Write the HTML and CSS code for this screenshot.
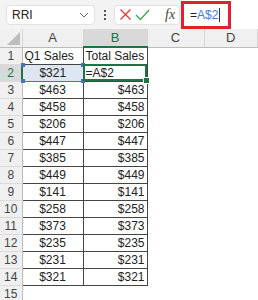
FILE: index.html
```html
<!DOCTYPE html>
<html lang="en">
<head>
    <meta charset="UTF-8">
    <title>Sheet</title>
    <link rel="stylesheet" href="styles.css">
</head>
<body>

<!-- Formula bar -->
<div class="toolbar">
    <div class="name-box">
        <span>RRI</span>
        <svg class="chevron" width="10" height="6" viewBox="0 0 10 6"><path d="M1 1 L5 5 L9 1" fill="none" stroke="#666" stroke-width="1"/></svg>
    </div>
    <div class="dots"><i></i><i></i><i></i></div>
    <div class="buttons">
        <svg width="13" height="13" viewBox="0 0 13 13"><path d="M1.5 1.5 L11.5 11.5 M11.5 1.5 L1.5 11.5" stroke="#e0393e" stroke-width="1.3"/></svg>
        <svg width="15" height="13" viewBox="0 0 15 13"><path d="M1 7 L5.5 11.5 L14 2" fill="none" stroke="#3fa45b" stroke-width="1.3"/></svg>
        <span class="fx">fx</span>
    </div>
    <div class="formula-area">
        <div class="formula">=<span class="ref">A$2</span><span class="caret"></span></div>
    </div>
</div>

<!-- Grid -->
<table class="grid">
    <colgroup>
        <col class="c-head"><col class="c-a"><col class="c-b"><col class="c-c"><col>
    </colgroup>
    <tr class="col-heads">
        <th class="corner"><span class="tri"></span></th>
        <th>A</th><th class="active">B</th><th>C</th><th>D</th>
    </tr>
    <tbody id="rows"></tbody>
</table>

<script>
    const values = [321, 463, 458, 206, 447, 385, 449, 141, 258, 373, 235, 231, 321];
    const rows = document.getElementById("rows");

    function addRow(num, a, b, cls) {
        const tr = document.createElement("tr");
        tr.innerHTML = `<th class="row-head ${num === 2 ? 'active' : ''}">${num}</th>` +
            `<td class="${cls || ''} a">${a}</td><td class="${cls || ''} b">${b}</td><td></td><td></td>`;
        rows.appendChild(tr);
        return tr;
    }

    addRow(1, "Q1 Sales", "Total Sales", "data text");
    const r2 = addRow(2, "$321", "=A$2", "data");
    r2.children[1].classList.add("ref-cell");
    r2.children[2].classList.add("edit-cell");
    r2.children[1].innerHTML += '<i class="h tl"></i><i class="h tr"></i><i class="h bl"></i><i class="h br"></i>';
    r2.children[2].innerHTML += '<i class="fill"></i>';
    values.slice(1).forEach((v, i) => addRow(i + 3, "$" + v, "$" + v, "data"));
    addRow(15, "", "", "");
</script>

</body>
</html>
```

FILE: styles.css
```css
body {
    margin: 0;
    padding: 0;
    width: 258px;
    height: 300px;
    overflow: hidden;
    background: #fff;
    font-family: "Liberation Sans", Arial, sans-serif;
    color: #222;
}
.toolbar {
    height: 29px;
    background: #f3f3f3;
    display: flex;
    align-items: center;
    padding-left: 6px;
}
.name-box {
    width: 89px;
    height: 20px;
    box-sizing: border-box;
    background: #fff;
    border: 1px solid #e2e2e2;
    border-radius: 4px;
    display: flex;
    align-items: center;
    justify-content: space-between;
    padding: 0 5px 0 5px;
    font-size: 12px;
}
.dots {
    width: 19px;
    display: flex;
    flex-direction: column;
    align-items: center;
    gap: 2px;
}
.dots i {
    width: 2px;
    height: 2px;
    background: #555;
}
.buttons {
    width: 66px;
    height: 20px;
    box-sizing: border-box;
    background: #fff;
    border: 1px solid #e2e2e2;
    border-radius: 4px;
    display: flex;
    align-items: center;
    padding-left: 4px;
    gap: 3px;
}
.fx {
    font-family: "Liberation Serif", serif;
    font-style: italic;
    font-size: 14px;
    margin-left: 12px;
    color: #444;
}
.formula-area {
    flex: 1;
    align-self: stretch;
    margin-left: 1px;
    background: #fff;
    display: flex;
    align-items: stretch;
}
.formula {
    width: 50px;
    margin-top: 1px;
    box-sizing: border-box;
    border: 3px solid #e3202d;
    display: flex;
    align-items: center;
    padding-left: 6px;
    font-size: 12px;
}
.formula .ref {
    color: #3b7dd8;
}
.caret {
    width: 1px;
    height: 14px;
    background: #333;
    margin-left: 1px;
}
.grid {
    border-collapse: collapse;
    table-layout: fixed;
    width: 258px;
    font-size: 12px;
}
.c-head { width: 22px; }
.c-a { width: 61px; }
.c-b { width: 64px; }
.c-c { width: 57px; }
.grid th, .grid td {
    padding: 0;
    height: 17px;
    box-sizing: border-box;
}
.col-heads th {
    height: 18px;
    background: #f0f0f0;
    font-weight: normal;
    color: #444;
    border-right: 1px solid #d6d6d6;
    border-bottom: 1px solid #bdbdbd;
    font-size: 13px;
}
.col-heads th.active {
    background: #d9d9d9;
    color: #217346;
    border-bottom: 2px solid #217346;
}
.corner {
    position: relative;
}
.tri {
    position: absolute;
    right: 2px;
    bottom: 2px;
    width: 0;
    height: 0;
    border-left: 13px solid transparent;
    border-bottom: 13px solid #bdbdbd;
}
.row-head {
    background: #f0f0f0;
    font-weight: normal;
    color: #444;
    font-size: 12px;
    border-bottom: 1px solid #dadada;
    border-right: 1px solid #bdbdbd;
}
.row-head.active {
    background: #d9d9d9;
    color: #217346;
    border-right: 2px solid #217346;
}
td.data {
    border: 1px solid #444;
    position: relative;
}
td.a {
    text-align: center;
}
td.b {
    text-align: right;
    padding-right: 2px;
}
td.text {
    text-align: left;
    padding-left: 2px;
}
td.ref-cell {
    background: #dde6f1;
    border-top: 1px solid #4472c4;
    border-bottom: 1px solid #4472c4;
}
td.edit-cell {
    text-align: left;
    padding-left: 2px;
    outline: 2px solid #217346;
    outline-offset: -2px;
}
.h {
    position: absolute;
    width: 4px;
    height: 4px;
    background: #4472c4;
}
.tl { left: -2px; top: -2px; }
.tr { right: -2px; top: -2px; }
.bl { left: -2px; bottom: -2px; }
.br { right: -2px; bottom: -2px; }
.fill {
    position: absolute;
    right: -3px;
    bottom: -3px;
    width: 5px;
    height: 5px;
    background: #217346;
    border: 1px solid #fff;
}
```
